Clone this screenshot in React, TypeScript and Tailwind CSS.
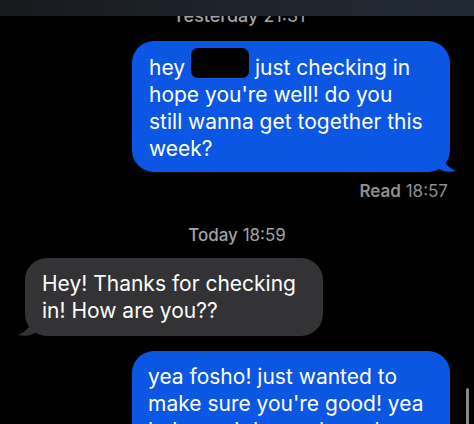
import React from 'react';

const font = { fontFamily: 'Inter, "Noto Sans", sans-serif' };

function SentTail() {
  return (
    <svg className="absolute -right-[6px] bottom-0" width="20" height="20" viewBox="0 0 20 20">
      <path d="M0 0 L6 0 C6 8 10 15 20 19 C12 21 4 19 0 14 Z" fill="#0b57e3" />
    </svg>
  );
}

function ReceivedTail() {
  return (
    <svg className="absolute -left-[7px] bottom-0" width="20" height="20" viewBox="0 0 20 20">
      <path d="M20 0 L14 0 C14 8 10 15 0 19 C8 21 16 19 20 14 Z" fill="#333335" />
    </svg>
  );
}

export default function App() {
  return (
    <div className="relative w-[474px] h-[424px] bg-black overflow-hidden text-white" style={font}>
      {/* nav bar overlaps the first timestamp */}
      <div className="absolute top-0 left-0 right-0 h-[16px] bg-gradient-to-r from-[#18191d] via-[#1e242d] to-[#222a35] z-10" />

      <div className="flex flex-col">
        <div className="text-center text-[18px] leading-none text-[#a3a3a7] pt-[7px] pl-[4px]">
          <span className="font-medium">Yesterday</span> 21:31
        </div>

        <div className="flex justify-end pr-[24px] mt-[16px]">
          <div className="relative w-[318px] bg-[#0b57e3] rounded-[22px] pl-[17px] pr-[21px] pt-[13px] pb-[10px] text-[21px] leading-[27px]">
            <p>
              hey <span className="inline-block align-middle w-[58px] h-[30px] -mt-[12px] bg-black rounded-[7px]" /> just checking in
              hope you're well! do you still wanna get together this week?
            </p>
            <SentTail />
          </div>
        </div>

        <div className="flex justify-end pr-[26px] mt-[7px] text-[17px] text-[#8e8e93]">
          <span className="font-semibold">Read</span>&nbsp;<span>18:57</span>
        </div>

        <div className="text-center text-[17px] text-[#a3a3a7] mt-[18px]">
          <span className="font-medium">Today</span> 18:59
        </div>

        <div className="flex justify-start pl-[25px] mt-[10px]">
          <div className="relative w-[298px] bg-[#333335] rounded-[22px] pl-[17px] pr-[10px] pt-[12px] pb-[12px] text-[21px] leading-[27px]">
            <p>Hey! Thanks for checking in! How are you??</p>
            <ReceivedTail />
          </div>
        </div>

        <div className="flex justify-end pr-[24px] mt-[15px]">
          <div className="relative w-[318px] bg-[#0b57e3] rounded-[22px] pl-[16px] pr-[10px] pt-[12px] pb-[10px] text-[21px] leading-[27px]">
            <p>yea fosho! just wanted to make sure you're good! yea haha and do you been here lately</p>
          </div>
        </div>
      </div>

      {/* scroll indicator */}
      <div className="absolute right-[5px] top-[388px] w-[3px] h-[40px] rounded-full bg-[#8a8a8a]" />
    </div>
  );
}
